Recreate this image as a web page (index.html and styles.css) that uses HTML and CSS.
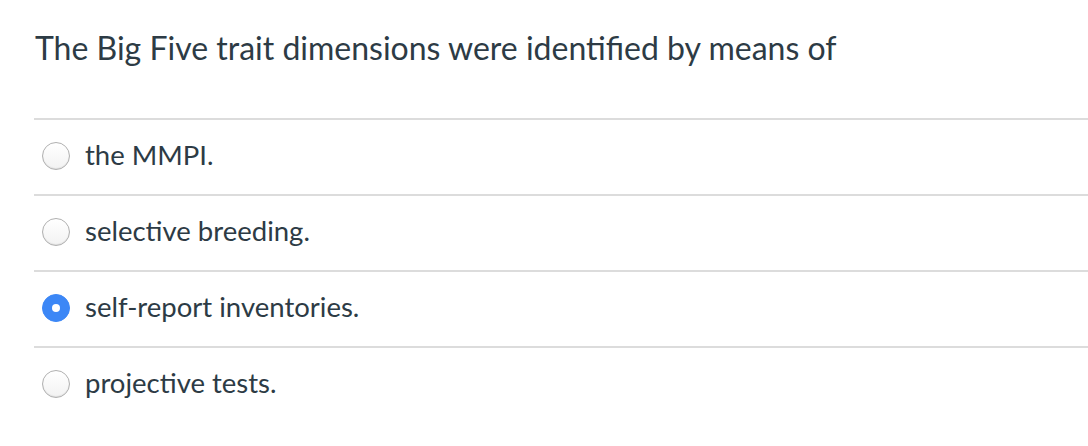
FILE: index.html
```html
<!DOCTYPE html>
<html>
<head>
<meta charset="utf-8">
<link rel="stylesheet" href="styles.css">
</head>
<body>
<div class="quiz">
  <div class="question">The Big Five trait dimensions were identified by means of</div>
  <div class="answers">
    <label class="answer"><span class="radio"></span><span class="text">the MMPI.</span></label>
    <label class="answer"><span class="radio"></span><span class="text">selective breeding.</span></label>
    <label class="answer"><span class="radio checked"></span><span class="text">self-report inventories.</span></label>
    <label class="answer"><span class="radio"></span><span class="text">projective tests.</span></label>
  </div>
</div>
</body>
</html>
```
FILE: styles.css
```css
html, body {
  margin: 0;
  padding: 0;
  background: #fff;
}
body {
  font-family: Lato, "Open Sans", sans-serif;
  color: #2d3b45;
}
.quiz {
  padding-left: 34px;
}
.question {
  font-size: 32px;
  line-height: 38px;
  padding-top: 29px;
  padding-left: 1px;
  height: 89px;
}
.answers {
  display: flex;
  flex-direction: column;
}
.answer {
  display: flex;
  align-items: center;
  height: 74px;
  border-top: 2px solid #dcdcdc;
}
.radio {
  box-sizing: border-box;
  width: 28px;
  height: 28px;
  margin-left: 8px;
  margin-right: 15px;
  margin-bottom: 2px;
  border-radius: 50%;
  border: 1px solid #b0b0b0;
  background: linear-gradient(#ffffff, #f2f2f2);
  box-shadow: inset 0 -1px 1px rgba(0,0,0,0.08);
  display: flex;
  align-items: center;
  justify-content: center;
}
.radio.checked {
  background: #3c87f6;
  border-color: #3c87f6;
  box-shadow: none;
}
.radio.checked::after {
  content: "";
  width: 8px;
  height: 8px;
  border-radius: 50%;
  background: #fff;
}
.text {
  font-size: 27.5px;
  line-height: 32px;
  margin-bottom: 5px;
}
```
